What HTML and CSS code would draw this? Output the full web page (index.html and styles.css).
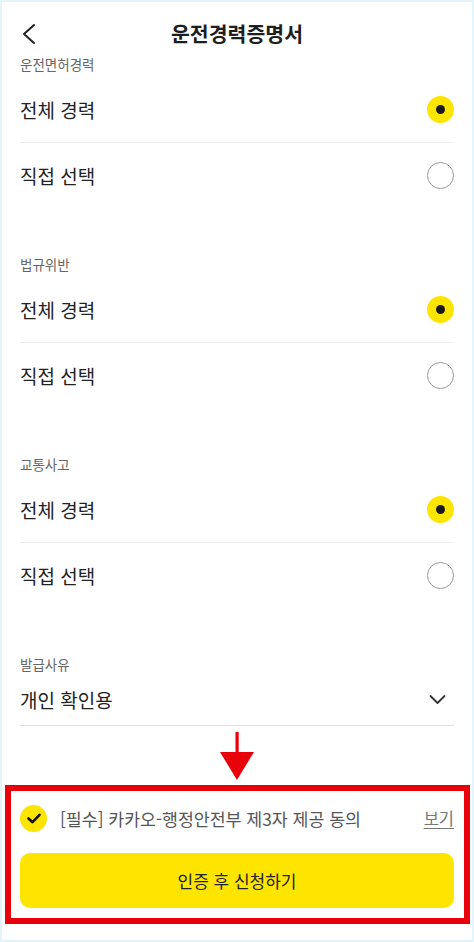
FILE: index.html
```html
<!DOCTYPE html>
<html lang="ko">
<head>
<meta charset="utf-8">
<title>운전경력증명서</title>
<link rel="stylesheet" href="styles.css">
</head>
<body>
<div class="screen">
  <header class="header">
    <svg class="back" width="16" height="22" viewBox="0 0 16 22"><path d="M13 2 L3 11 L13 20" fill="none" stroke="#222" stroke-width="2" stroke-linecap="round" stroke-linejoin="round"/></svg>
    <h1 class="title">운전경력증명서</h1>
  </header>

  <section class="group">
    <div class="group-label">운전면허경력</div>
    <div class="option option-first"><span>전체 경력</span><span class="radio radio-on"></span></div>
    <div class="option"><span>직접 선택</span><span class="radio"></span></div>
  </section>

  <section class="group">
    <div class="group-label">법규위반</div>
    <div class="option option-first"><span>전체 경력</span><span class="radio radio-on"></span></div>
    <div class="option"><span>직접 선택</span><span class="radio"></span></div>
  </section>

  <section class="group">
    <div class="group-label">교통사고</div>
    <div class="option option-first"><span>전체 경력</span><span class="radio radio-on"></span></div>
    <div class="option"><span>직접 선택</span><span class="radio"></span></div>
  </section>

  <section class="group group-last">
    <div class="group-label">발급사유</div>
    <div class="select"><span>개인 확인용</span>
      <svg width="17" height="11" viewBox="0 0 17 11"><path d="M1.5 2 L8.5 9 L15.5 2" fill="none" stroke="#333" stroke-width="1.8" stroke-linecap="round" stroke-linejoin="round"/></svg>
    </div>
  </section>

  <footer class="footer">
    <div class="agree">
      <span class="check"><svg width="26" height="26" viewBox="0 0 26 26"><path d="M7.5 13.5 L11.5 17.2 L18.5 9.8" fill="none" stroke="#111" stroke-width="2.6" stroke-linecap="round" stroke-linejoin="round"/></svg></span>
      <span class="agree-text">[필수] 카카오-행정안전부 제3자 제공 동의</span>
      <a class="view">보기</a>
    </div>
    <button class="submit">인증 후 신청하기</button>
  </footer>

  <svg class="arrow" width="34" height="52" viewBox="0 0 34 52"><rect x="15.5" y="2" width="3.2" height="24" fill="#e8000b"/><polygon points="0,22 34,22 17,50" fill="#e8000b"/></svg>
  <div class="highlight"></div>
</div>
</body>
</html>
```

FILE: styles.css
```css
* { box-sizing: border-box; }
html, body { margin: 0; padding: 0; }
body {
  font-family: "Noto Sans CJK KR", "Noto Sans", sans-serif;
  color: #222;
  background: #fff;
}
.screen {
  position: relative;
  width: 474px;
  height: 942px;
  display: flex;
  flex-direction: column;
  background: #fff;
  box-shadow: inset 0 0 0 2px #e2f5fa;
}
.header {
  height: 55px;
  padding-top: 20px;
  position: relative;
  display: flex;
  justify-content: center;
}
.back {
  position: absolute;
  left: 21px;
  top: 23px;
}
.title {
  margin: 0;
  font-size: 20.5px;
  line-height: 26px;
  font-weight: 700;
  color: #1e1e1e;
}
.group {
  padding: 0 20px;
  margin-bottom: 48px;
}
.group-last { margin-bottom: 0; }
.group-label {
  font-size: 13.5px;
  line-height: 18px;
  color: #666;
}
.option {
  height: 64px;
  display: flex;
  align-items: center;
  justify-content: space-between;
  font-size: 19px;
  color: #222;
}
.option-first {
  margin-top: 3px;
  height: 67px;
  border-bottom: 1px solid #eeeeee;
}
.radio {
  width: 27px;
  height: 27px;
  border-radius: 50%;
  border: 1.6px solid #9a9a9a;
  display: flex;
  align-items: center;
  justify-content: center;
}
.radio-on {
  border: none;
  background: #fee500;
}
.radio-on::after {
  content: "";
  width: 9px;
  height: 9px;
  border-radius: 50%;
  background: #1a1a1a;
}
.select {
  height: 53px;
  display: flex;
  align-items: center;
  justify-content: space-between;
  font-size: 19px;
  border-bottom: 1px solid #e2e2e2;
  padding-right: 8px;
}
.footer {
  margin-top: auto;
  padding: 0 20px 34px;
}
.agree {
  height: 36px;
  display: flex;
  align-items: center;
  margin-bottom: 17px;
}
.check {
  width: 27px;
  height: 27px;
  border-radius: 50%;
  background: #fee500;
  display: flex;
  align-items: center;
  justify-content: center;
  flex-shrink: 0;
}
.agree-text {
  margin-left: 13px;
  font-size: 17.3px;
  color: #555;
  flex: 1;
  white-space: nowrap;
}
.view {
  font-size: 16.5px;
  color: #777;
  text-decoration: underline;
  text-underline-offset: 3px;
}
.submit {
  display: block;
  width: 100%;
  height: 55px;
  border: none;
  border-radius: 10px;
  background: #fee500;
  font-family: inherit;
  font-size: 17px;
  color: #222;
}
.arrow {
  position: absolute;
  left: 220px;
  top: 730px;
}
.highlight {
  position: absolute;
  left: 5px;
  top: 785px;
  width: 465px;
  height: 139px;
  border: 6px solid #e8000b;
  pointer-events: none;
}
```
